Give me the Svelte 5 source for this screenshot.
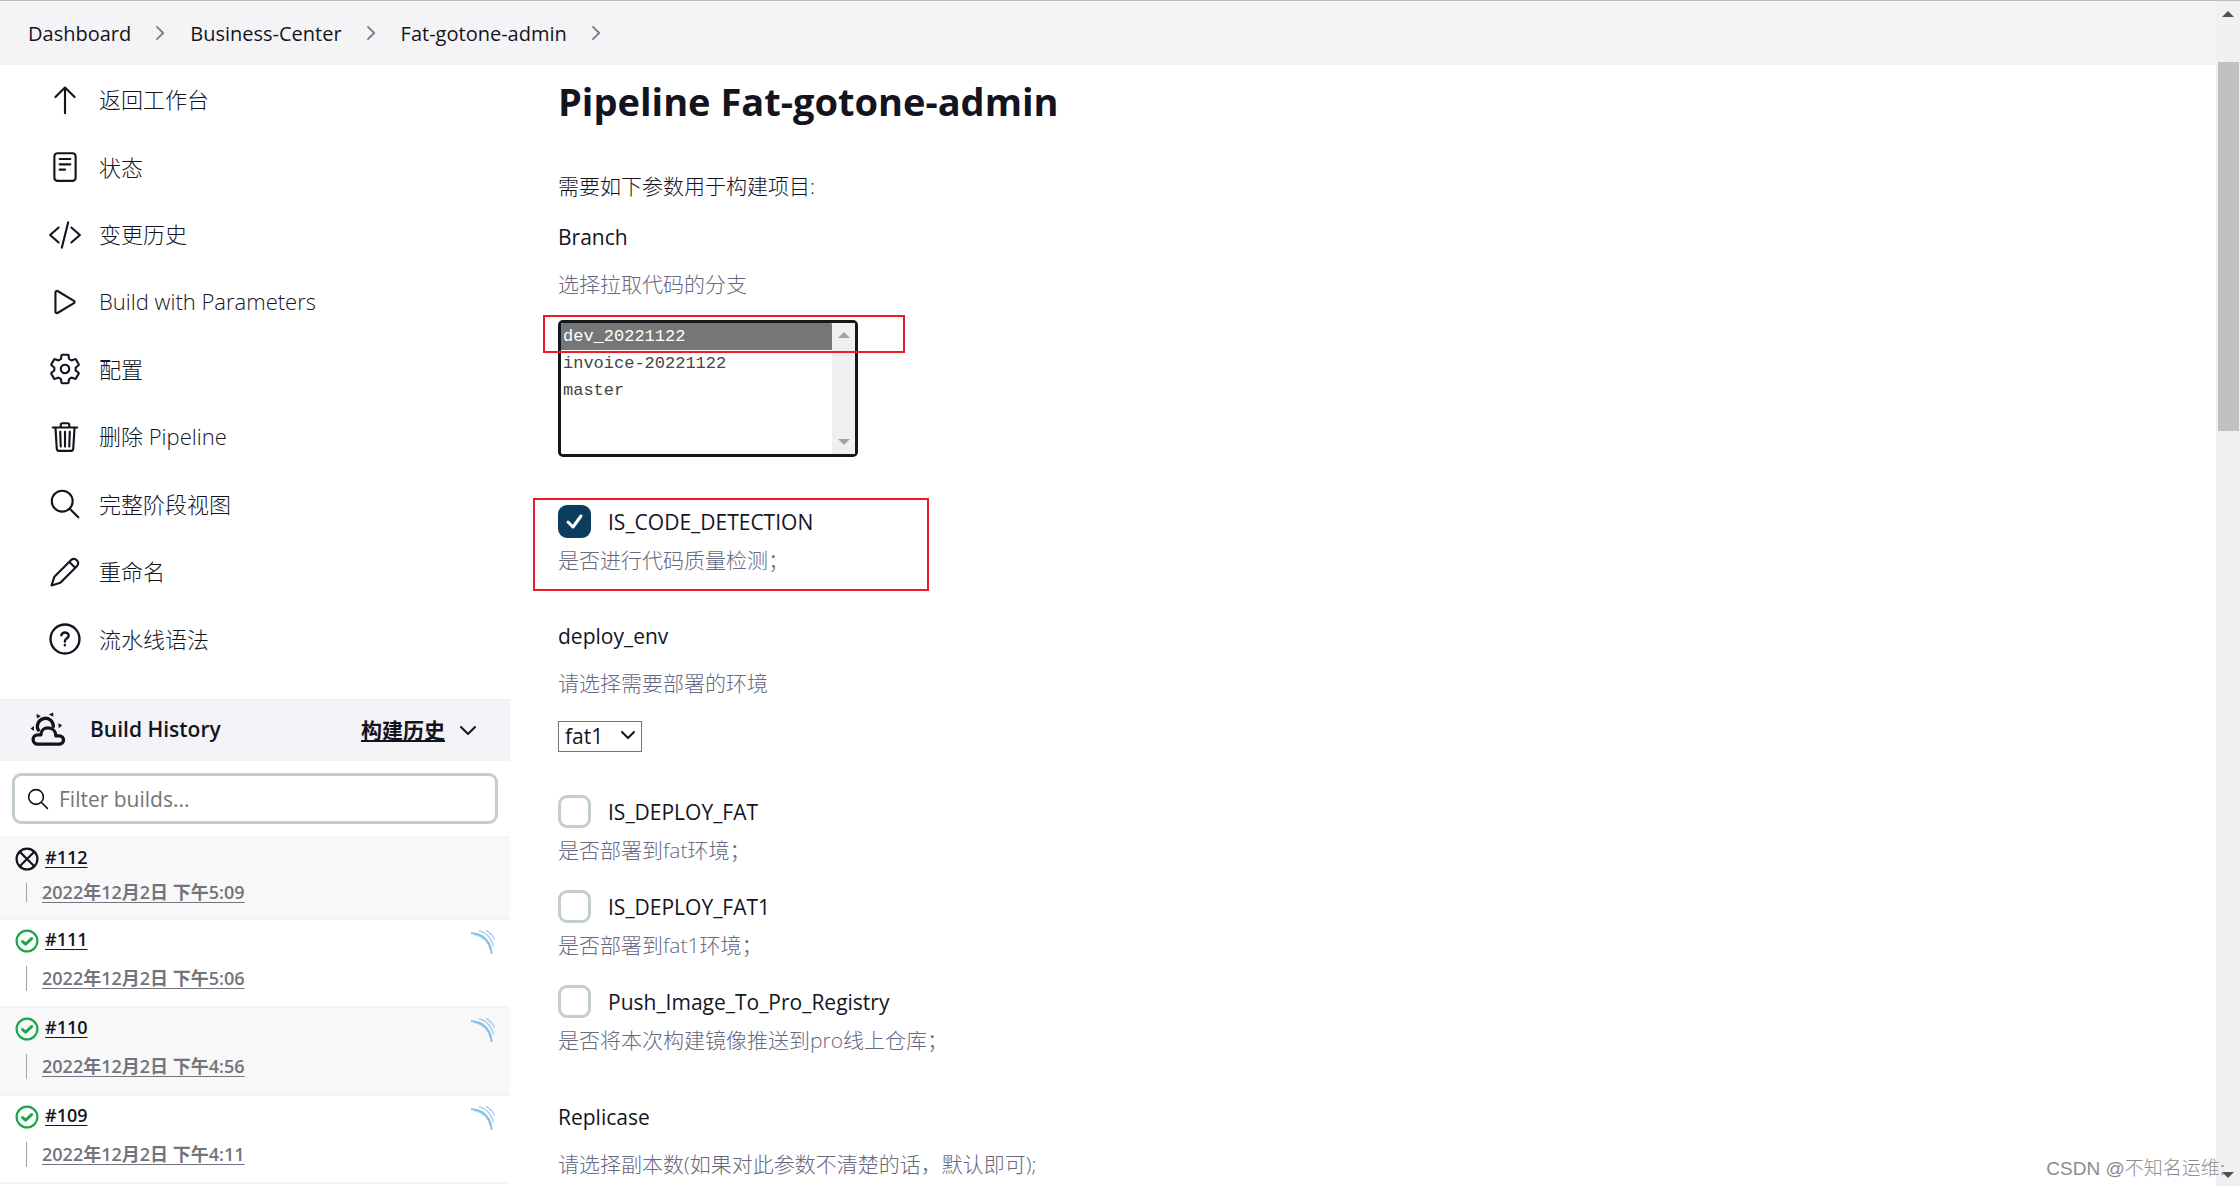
<script>
const crumbs = ['Dashboard', 'Business-Center', 'Fat-gotone-admin']

const tasks = [
  { label: '返回工作台', icon: 'up' },
  { label: '状态', icon: 'reader' },
  { label: '变更历史', icon: 'code' },
  { label: 'Build with Parameters', icon: 'play' },
  { label: '配置', icon: 'settings' },
  { label: '删除 Pipeline', icon: 'trash' },
  { label: '完整阶段视图', icon: 'search' },
  { label: '重命名', icon: 'pencil' },
  { label: '流水线语法', icon: 'help' }
]

const icons = {
  up: 'M112 212L256 68l144 144M256 76v380',
  reader: 'M144 48h224a48 48 0 0148 48v320a48 48 0 01-48 48H144a48 48 0 01-48-48V96a48 48 0 0148-48zM176 136h160M176 216h160M176 296h80',
  code: 'M160 368L32 256l128-112M352 368l128-112-128-112M304 64l-96 384',
  play: 'M112 111v290c0 17.44 17 28.52 31 20.16l247.9-148.37c12.12-7.25 12.12-26.33 0-33.58L143 90.84c-14-8.36-31 2.72-31 20.16z',
  settings: 'M262.29 192.31a64 64 0 1057.4 57.4 64.13 64.13 0 00-57.4-57.4zM416.39 256a154.34 154.34 0 01-1.53 20.79l45.21 35.46a10.81 10.81 0 012.45 13.75l-42.77 74a10.81 10.81 0 01-13.14 4.59l-44.9-18.08a16.11 16.11 0 00-15.17 1.75A164.48 164.48 0 01325 400.8a15.94 15.94 0 00-8.82 12.14l-6.73 47.89a11.08 11.08 0 01-10.68 9.17h-85.54a11.11 11.11 0 01-10.69-8.87l-6.72-47.82a16.07 16.07 0 00-9-12.22 155.3 155.3 0 01-21.46-12.57 16 16 0 00-15.11-1.71l-44.89 18.07a10.81 10.81 0 01-13.14-4.58l-42.77-74a10.8 10.8 0 012.45-13.75l38.21-30a16.05 16.05 0 006-14.08c-.36-4.17-.58-8.33-.58-12.5s.21-8.27.58-12.35a16 16 0 00-6.07-13.94l-38.19-30A10.81 10.81 0 0149.48 186l42.77-74a10.81 10.81 0 0113.14-4.59l44.9 18.08a16.11 16.11 0 0015.17-1.75A164.48 164.48 0 01187 111.2a15.94 15.94 0 008.82-12.14l6.73-47.89A11.08 11.08 0 01213.23 42h85.54a11.11 11.11 0 0110.69 8.87l6.72 47.82a16.07 16.07 0 009 12.22 155.3 155.3 0 0121.46 12.57 16 16 0 0015.11 1.71l44.89-18.07a10.81 10.81 0 0113.14 4.58l42.77 74a10.8 10.8 0 01-2.45 13.75l-38.21 30a16.05 16.05 0 00-6.05 14.08c.33 4.14.55 8.3.55 12.47z',
  trash: 'M112 112l20 320c.95 18.49 14.4 32 32 32h184c17.67 0 30.87-13.51 32-32l20-320M72 112h368M192 112V72a24 24 0 0124-24h80a24 24 0 0124 24v40M256 176v224M184 176l8 224M328 176l-8 224',
  search: 'M214 56a157 157 0 10157 157A157 157 0 00214 56zM331 331L456 456',
  pencil: 'M54 458l42-132L348 74a64 64 0 0190 90L186 418zM322 104l88 88',
  help: 'M256 38a218 218 0 10218 218A218 218 0 00256 38zM200 202s1-17 20-32c11-9 24-12 36-12 11 0 21 2 27 5 10 4 29 16 29 41 0 26-17 37-36 50s-22 27-22 42M254 346v4'
}

const builds = [
  { id: '#112', date: '2022年12月2日 下午5:09', ok: false },
  { id: '#111', date: '2022年12月2日 下午5:06', ok: true },
  { id: '#110', date: '2022年12月2日 下午4:56', ok: true },
  { id: '#109', date: '2022年12月2日 下午4:11', ok: true }
]

const deploys = [
  { name: 'IS_DEPLOY_FAT', hint: '是否部署到fat环境；' },
  { name: 'IS_DEPLOY_FAT1', hint: '是否部署到fat1环境；' },
  { name: 'Push_Image_To_Pro_Registry', hint: '是否将本次构建镜像推送到pro线上仓库；' }
]
</script>

<div class='window'>
  <div class='page'>
    <nav class='crumbs'>
      {#each crumbs as crumb}
        <a href='#top'>{crumb}</a>
        <svg viewBox='0 0 10 18'><path d='M1 2l7 7-7 7' /></svg>
      {/each}
    </nav>

    <div class='body'>
      <aside>
        <nav class='tasks'>
          {#each tasks as task}
            <a href='#task'>
              <svg class='icon' class:bold={task.icon === 'help'} viewBox='0 0 512 512'><path d={icons[task.icon]} /></svg>
              <span>{task.label}</span>
            </a>
          {/each}
        </nav>

        <section class='history'>
          <header>
            <svg class='weather' viewBox='0 0 38 38'>
              <path class='line' d='M8 33a4.8 4.8 0 010-9.6h3.2c0-4 3-7 7.4-7s7.8 3.3 8 8.1h3.6a4.2 4.2 0 010 8.5z' />
              <path class='line' d='M8.6 18.600a8.200 8.200 0 1115.4-3.800' />
              <path d='M6.6 2l4.6 2-4 2.6zM23.8.4l.2 4.6-4.8-2.4zM.6 17l3.4-2.6v5zM29 11.6l4 2-3.4 3z' />
            </svg>
            <h2>Build History</h2>
            <a href='#trend'>构建历史</a>
            <svg class='down' viewBox='0 0 18 12'><path d='M2 2l7 7 7-7' /></svg>
          </header>

          <div class='filter'>
            <svg class='lens' viewBox='0 0 512 512'><path d={icons.search} /></svg>
            <input type='text' placeholder='Filter builds...' aria-label='Filter builds' />
          </div>

          <ul>
            {#each builds as build}
              <li class:ok={build.ok}>
                <div class='title'>
                  <svg class='status' viewBox='0 0 24 24'>
                    <circle cx='12' cy='12' r='10.4' />
                    {#if build.ok}
                      <path class='tick' d='M7.6 12.6l3 2.6 6-5.6' />
                    {:else}
                      <path d='M5 5l14 14M19 5L5 19' />
                    {/if}
                  </svg>
                  <a href='#build'>{build.id}</a>
                  {#if build.ok}
                    <svg class='gitlab' viewBox='0 0 24 24'>
                      <path d='M0 3.2C11 3.4 20.4 11 20.6 24' />
                      <path class='soft' d='M3 4c9 2 15 8 17 17M8 .6c7 2 12.5 7 14.6 16' />
                      <path class='soft' d='M15 .4c4 2 7 5 9 9.6' />
                    </svg>
                  {/if}
                </div>
                <div class='date'><a href='#build'>{build.date}</a></div>
              </li>
            {/each}
          </ul>
        </section>
      </aside>

      <main>
        <h1>Pipeline Fat-gotone-admin</h1>
        <p class='intro'>需要如下参数用于构建项目:</p>

        <div class='field'>
          <label for='branch'>Branch</label>
          <p class='hint'>选择拉取代码的分支</p>
          <div class='listbox'>
            <select id='branch' size='5'>
              <option selected>dev_20221122</option>
              <option>invoice-20221122</option>
              <option>master</option>
            </select>
            <div class='listbar'>
              <svg viewBox='0 0 12 6'><path d='M0 6l6-6 6 6z' /></svg>
              <svg viewBox='0 0 12 6'><path d='M0 0l6 6 6-6z' /></svg>
            </div>
            <div class='mark mark-branch'></div>
          </div>
        </div>

        <div class='field check'>
          <label><input type='checkbox' checked /><svg viewBox='0 0 33 33'><path d='M10 17l5 5 8-11' /></svg>IS_CODE_DETECTION</label>
          <p class='hint'>是否进行代码质量检测；</p>
          <div class='mark mark-check'></div>
        </div>

        <div class='field env'>
          <label for='env'>deploy_env</label>
          <p class='hint'>请选择需要部署的环境</p>
          <div class='dropdown'>
            <select id='env'>
              <option>fat1</option>
            </select>
            <svg viewBox='0 0 14 10'><path d='M1 2l6 6 6-6' /></svg>
          </div>
        </div>

        {#each deploys as deploy}
          <div class='field check'>
            <label><input type='checkbox' />{deploy.name}</label>
            <p class='hint'>{deploy.hint}</p>
          </div>
        {/each}

        <div class='field replicas'>
          <span>Replicase</span>
          <p class='hint'>请选择副本数(如果对此参数不清楚的话，默认即可);</p>
        </div>
      </main>
    </div>
  </div>

  <div class='scrollbar'>
    <svg viewBox='0 0 12 6'><path d='M0 6l6-6 6 6z' /></svg>
    <div class='track'><div class='thumb'></div></div>
    <svg viewBox='0 0 12 6'><path d='M0 0l6 6 6-6z' /></svg>
  </div>
  <div class='watermark'>CSDN @不知名运维:</div>
</div>

<style>
  :global(body) {
    background: #fff;
    color: #14141f;
    font-family: 'Open Sans', 'Noto Sans CJK SC', sans-serif;
    font-size: 21px;
  }
  h1, h2, p, ul {
    margin: 0;
    padding: 0;
  }
  a {
    color: inherit;
    text-decoration: none;
  }
  svg {
    flex: none;
    fill: none;
    stroke: currentColor;
    stroke-linecap: round;
    stroke-linejoin: round;
  }
  .window {
    position: relative;
    display: flex;
    height: 100vh;
    box-sizing: border-box;
    border-top: 1px solid #bcbcbe;
    overflow: hidden;
  }
  .page {
    flex: 1;
    min-width: 0;
  }
  .crumbs {
    display: flex;
    align-items: center;
    height: 64px;
    padding-left: 28px;
    gap: 25px;
    background: #f4f4f7;
    font-size: 20px;
  }
  .crumbs svg {
    width: 9px;
    height: 16px;
    color: #7c7c86;
    stroke-width: 2;
  }
  .body {
    display: flex;
  }
  aside {
    width: 510px;
    flex: none;
  }
  .tasks {
    display: grid;
    grid-auto-rows: 1fr;
    min-height: 607px;
    padding: 1px 0 26px 48px;
  }
  .tasks a {
    display: flex;
    align-items: center;
    gap: 17px;
    font-size: 22px;
    font-weight: 300;
  }
  .tasks span {
    padding-bottom: 3px;
  }
  .icon {
    width: 34px;
    height: 34px;
    stroke-width: 32;
  }
  .bold {
    stroke-width: 36;
  }
  .history header {
    display: flex;
    align-items: center;
    height: 61px;
    padding: 0 33px 0 30px;
    border-top: 1px solid #f0f0f4;
    background: #f3f3f8;
  }
  .weather {
    width: 37px;
    height: 37px;
    fill: currentColor;
    stroke: none;
  }
  .weather .line {
    fill: none;
    stroke: currentColor;
    stroke-width: 3.4;
  }
  h2 {
    flex: 1;
    padding: 0 0 4px 23px;
    font-size: 21px;
    font-weight: 600;
  }
  .history header a {
    padding-bottom: 4px;
    font-weight: 700;
    text-decoration: underline;
  }
  .down {
    width: 18px;
    height: 12px;
    margin-left: 14px;
    stroke-width: 2;
  }
  .filter {
    display: flex;
    align-items: center;
    gap: 9px;
    height: 45px;
    margin: 12px;
    padding-left: 11px;
    border: 3px solid #c3cdd2;
    border-radius: 9px;
  }
  .lens {
    width: 24px;
    height: 24px;
    stroke-width: 34;
  }
  .filter input {
    flex: 1;
    min-width: 0;
    padding: 0;
    border: 0;
    outline: 0;
    background: none;
    font: inherit;
  }
  .filter input::placeholder {
    color: #757575;
  }
  ul {
    border-bottom: 2px solid #f3f3f8;
    list-style: none;
  }
  li {
    height: 80px;
    border-top: 2px solid #f3f3f8;
    background: #f8f8f8;
    font-size: 18px;
    font-weight: 600;
  }
  li.ok {
    height: 86px;
  }
  li:nth-child(even) {
    background: #fff;
  }
  .title {
    display: flex;
    align-items: center;
    gap: 6px;
    height: 38px;
    padding: 0 15px;
  }
  .title a, .date a {
    text-decoration: underline;
    text-underline-offset: 3px;
  }
  .status {
    width: 24px;
    height: 24px;
    margin-top: 4px;
    stroke-width: 2.2;
  }
  .ok .status {
    color: #1ea64b;
  }
  .tick {
    stroke-width: 3;
  }
  .gitlab {
    width: 24px;
    height: 24px;
    margin: 6px 0 0 auto;
    color: #80bde2;
    stroke-width: 1.8;
    stroke-linecap: butt;
  }
  .soft {
    opacity: .6;
  }
  .date {
    margin: 7px 0 0 26px;
    padding-left: 15px;
    border-left: 1px solid #9aa5ae;
    color: #73737d;
    line-height: 19px;
  }
  .ok .date {
    margin-top: 8px;
    line-height: 25px;
  }
  main {
    flex: 1;
    min-width: 0;
    padding: 8px 48px 0;
    line-height: 32px;
  }
  h1 {
    font-size: 38px;
    line-height: 56px;
    font-weight: 700;
  }
  .intro {
    margin: 41px 0 19px;
    font-weight: 300;
  }
  .field {
    position: relative;
    margin-bottom: 24px;
  }
  .field > label, .field > span {
    display: block;
  }
  .hint {
    margin-top: 15px;
    color: #67677f;
    font-weight: 300;
  }
  .check .hint {
    margin-top: 6px;
  }
  .check > label {
    display: flex;
    align-items: center;
    gap: 17px;
    height: 33px;
  }
  .check input {
    appearance: none;
    width: 33px;
    height: 33px;
    margin: 0;
    border: 3px solid #c3cdd2;
    border-radius: 9px;
  }
  .check input:checked {
    border-color: #0b3e5e;
    background: #0b3e5e;
  }
  .check label svg {
    width: 33px;
    height: 33px;
    margin-left: -50px;
    color: #fff;
    stroke-width: 3;
  }
  .listbox {
    position: relative;
    display: flex;
    width: 294px;
    height: 131px;
    margin: 20px 0 48px;
    border: 3px solid #14181a;
    border-radius: 5px;
  }
  .listbox select {
    flex: 1;
    padding: 0;
    border: 0;
    outline: 0;
    overflow: hidden;
    background: #fff;
    font: 17px 'Liberation Mono', monospace;
  }
  .listbox option {
    min-height: 0;
    padding: 4px 2px;
    color: #444;
  }
  .listbox option:checked {
    background: #767676 linear-gradient(#767676, #767676);
    color: #fff;
  }
  .listbar {
    display: flex;
    flex-direction: column;
    justify-content: space-between;
    align-items: center;
    width: 23px;
    padding: 9px 0;
    background: #f0f0f0;
  }
  .listbar svg, .scrollbar svg {
    width: 12px;
    height: 6px;
    fill: #a3a3a3;
    stroke: none;
  }
  .mark {
    position: absolute;
    border: 2px solid #ed1c24;
    pointer-events: none;
  }
  .mark-branch {
    inset: -8px -50px 101px -18px;
  }
  .mark-check {
    top: -7px;
    left: -25px;
    width: 392px;
    height: 89px;
  }
  .env {
    margin: 44px 0;
  }
  .dropdown {
    position: relative;
    width: 84px;
    height: 31px;
    margin-top: 21px;
  }
  .dropdown select {
    appearance: none;
    width: 100%;
    height: 100%;
    padding: 0 6px;
    border: 1px solid #767676;
    border-radius: 0;
    background: #fff;
    color: inherit;
    font: inherit;
    line-height: 28px;
  }
  .dropdown svg {
    position: absolute;
    top: 10px;
    right: 7px;
    width: 14px;
    height: 10px;
    stroke-width: 2;
  }
  .replicas {
    margin-top: 45px;
  }
  .scrollbar {
    display: flex;
    flex-direction: column;
    align-items: center;
    width: 24px;
    padding: 10px 0 8px;
    box-sizing: border-box;
    background: #f0f0f0;
  }
  .scrollbar svg {
    fill: #505050;
  }
  .track {
    flex: 1;
    width: 21px;
    padding: 45px 0 26px;
  }
  .thumb {
    height: 34%;
    background: #c1c1c1;
  }
  .watermark {
    position: absolute;
    right: 15px;
    bottom: 6px;
    color: #8c8c8c;
    font-family: 'Liberation Sans', 'Noto Sans CJK SC', sans-serif;
    font-size: 19px;
    font-weight: 300;
  }
</style>
